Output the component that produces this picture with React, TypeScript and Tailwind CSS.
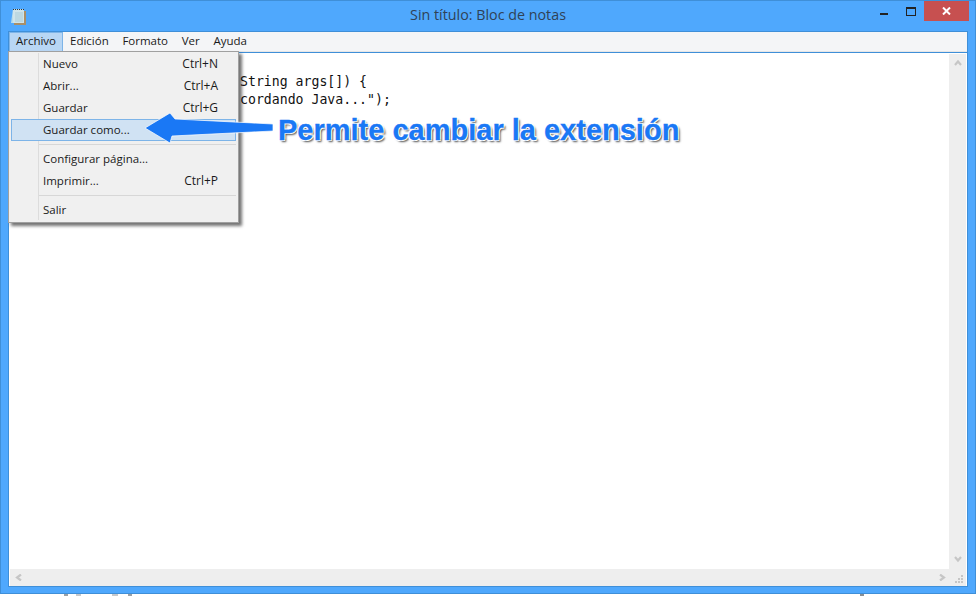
const menuTop = ["Edición", "Formato", "Ver", "Ayuda"];

function Item({ label, shortcut, active }: { label: string; shortcut?: string; active?: boolean }) {
  return (
    <div
      className={`relative flex h-[22px] items-center justify-between border pl-[31px] pr-[17px] ${
        active ? "border-[#7db4e8] bg-[#d0e2f3]" : "border-transparent"
      }`}
    >
      <span className="pb-px">{label}</span>
      {shortcut && <span className="pb-px text-[12px]">{shortcut}</span>}
    </div>
  );
}

function Chevron({ d, w = 8, h = 7 }: { d: string; w?: number; h?: number }) {
  return (
    <svg width={w} height={h} viewBox={`0 0 ${w} ${h}`} className="shrink-0">
      <path d={d} fill="none" stroke="#c6c6c6" strokeWidth="2.2" />
    </svg>
  );
}

function NotepadIcon() {
  return (
    <svg className="absolute left-[2px] top-[7px]" width="16" height="17" viewBox="0 0 16 17">
      <rect x="4" y="3" width="12" height="14" fill="#a98f68" />
      <path d="M3 1H14V15H1Z" fill="#b7dcec" />
      <rect x="3" y="2" width="11" height="13" fill="#cfe4ea" />
      <path d="M5 5h8M5 7h8M5 9h8M5 11h8M5 13h8" stroke="#a9ccd8" />
      <path d="M3 1.500h11" stroke="#333" strokeDasharray="1 1" />
    </svg>
  );
}

export default function App() {
  return (
    <div className="relative h-[596px] w-[976px] overflow-hidden bg-white font-['Open_Sans',sans-serif] text-[11.5px] text-[#1a1a1a]">
      <div className="flex h-[594px] flex-col border border-[#3f8fd8] bg-[#4fa8fd] px-[7px] pb-[6px]">
        <div className="relative flex h-[30px] shrink-0 items-center justify-center pb-[2px] text-[14.3px] text-[#2f4257]">
          <NotepadIcon />
          <span>Sin título: Bloc de notas</span>
          <div className="absolute right-[-1px] top-0 flex h-[20px] items-start">
            <div className="mr-[18px] mt-[12px] h-[2px] w-[8px] bg-[#222]" />
            <div className="mr-[8px] mt-[6px] h-[9px] w-[10px] border border-t-[2px] border-[#222]" />
            <div className="flex h-[20px] w-[45px] items-center justify-center bg-[#c75050]">
              <svg width="9" height="8" viewBox="0 0 9 8">
                <path d="M1 0.500L8 7.500M8 0.500L1 7.500" stroke="#fff" strokeWidth="2" />
              </svg>
            </div>
          </div>
        </div>
        <div className="flex h-[21px] shrink-0 items-center border border-b-0 border-[#3f8fd8] bg-[#f4f5f7] shadow-[inset_0_-1px_0_#e6e6e6]">
          <div className="flex h-[20px] w-[54px] items-center justify-center border border-[#7db4e8] bg-[#b8d6f4] pb-[2px]">Archivo</div>
          <div className="flex gap-[13.7px] pb-[2px] pl-[7px]">
            {menuTop.map((m) => (
              <span key={m}>{m}</span>
            ))}
          </div>
        </div>
        <div className="flex min-h-0 flex-1 flex-col border border-[#3f8fd8] bg-white p-px pb-0">
          <div className="flex min-h-0 flex-1">
            <pre className="flex-1 pl-[230px] pt-[19px] font-['DejaVu_Sans_Mono',monospace] text-[13.2px] leading-[18px] text-[#111]">
              {"String args[]) {\ncordando Java...\");"}
            </pre>
            <div className="flex w-[17px] flex-col items-center justify-between bg-[#eeeeee] py-[5px] pb-[6px]">
              <Chevron d="M1 6L4 2.500L7 6" />
              <Chevron d="M1 1L4 4.500L7 1" />
            </div>
          </div>
          <div className="flex h-[17px] shrink-0 items-center bg-[#eeeeee] pl-[5px]">
            <Chevron d="M6 0.500L2 3.500L6 6.500" />
            <div className="flex-1" />
            <Chevron d="M2 0.500L6 3.500L2 6.500" />
            <svg className="ml-[9px] mr-[2px] mt-[3px]" width="9" height="9" viewBox="0 0 9 9" fill="#c6c6c6">
              <path d="M6 0h2v2H6zM3 3h2v2H3zM6 3h2v2H6zM0 6h2v2H0zM3 6h2v2H3zM6 6h2v2H6z" />
            </svg>
          </div>
        </div>
      </div>

      {/* scraps of the desktop below the window */}
      <div className="absolute left-[64px] top-[594px] h-[2px] w-[4px] bg-[#9aa0a6]" />
      <div className="absolute left-[76px] top-[594px] h-[2px] w-[5px] bg-[#c5c8cc]" />
      <div className="absolute left-[112px] top-[594px] h-[2px] w-[6px] bg-[#c5c8cc]" />
      <div className="absolute left-[128px] top-[594px] h-[2px] w-[4px] bg-[#9aa0a6]" />
      <div className="absolute left-[860px] top-[594px] h-[2px] w-[4px] bg-[#8a8f94]" />

      <div className="absolute left-[8px] top-[51px] w-[231px] border border-[#a0a0a0] bg-[#f0f0f0] px-[2px] py-px shadow-[3px_3px_3px_rgba(0,0,0,0.55)]">
        <div className="absolute bottom-[2px] left-[29px] top-px w-px bg-[#dcdcdc]" />
        <Item label="Nuevo" shortcut="Ctrl+N" />
        <Item label="Abrir..." shortcut="Ctrl+A" />
        <Item label="Guardar" shortcut="Ctrl+G" />
        <Item label="Guardar como..." active />
        <div className="my-[3px] ml-[28px] mr-0 h-px bg-[#d7d7d7]" />
        <Item label="Configurar página..." />
        <Item label="Imprimir..." shortcut="Ctrl+P" />
        <div className="my-[3px] ml-[28px] mr-0 h-px bg-[#d7d7d7]" />
        <Item label="Salir" />
      </div>

      <svg className="absolute left-[143px] top-[110px]" width="135" height="36" viewBox="0 0 135 36">
        <path d="M2 18L27 3L32 9L130 14V21L29 26L27 33Z" fill="#1a78f5" stroke="#fff" strokeOpacity="0.7" strokeWidth="1" />
      </svg>
      <div className="absolute left-[278px] top-[113px] font-['Liberation_Sans',sans-serif] text-[29px] font-bold leading-[34px] text-[#1a78f5] [-webkit-text-stroke:0.3px_#1a78f5] [text-shadow:1px_1px_0_#fff,-1px_-1px_0_#fff,1px_-1px_0_#fff,-1px_1px_0_#fff,2px_2px_2px_#555]">
        Permite cambiar la extensión
      </div>
    </div>
  );
}
